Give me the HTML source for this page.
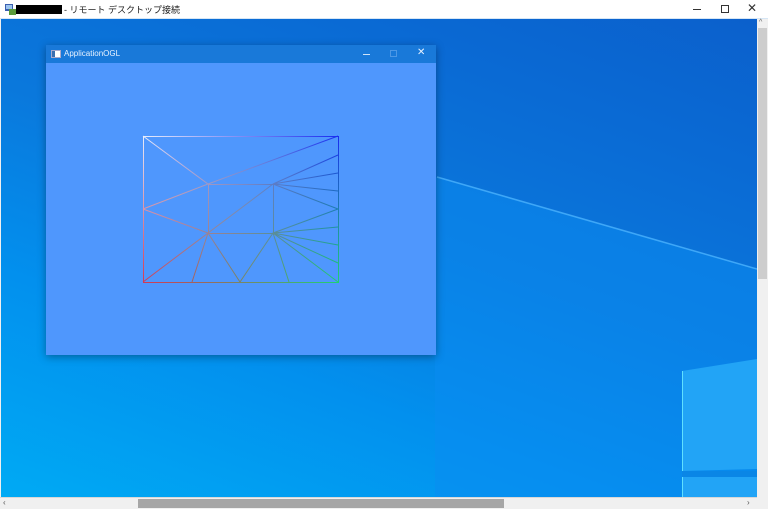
<!DOCTYPE html>
<html><head><meta charset="utf-8"><style>
*{margin:0;padding:0;box-sizing:border-box}
body{width:768px;height:509px;overflow:hidden;background:#f0f0f0;font-family:"Liberation Sans","Noto Sans CJK JP",sans-serif;position:relative}
.tb{position:absolute;left:0;top:0;width:768px;height:19px;background:#fff;border-bottom:1px solid #d6e6f5}
.desk{position:absolute;left:1px;top:19px;width:756px;height:478px;overflow:hidden;
background:linear-gradient(20deg,#00aaf4 0%,#0290ee 30%,#0a78dc 55%,#0a6ad4 80%,#0b60cc 100%)}
.vs{position:absolute;left:757px;top:19px;width:11px;height:478px;background:#f0f0f0}
.hs{position:absolute;left:0;top:497px;width:757px;height:12px;background:#f0f0f0;border-top:1px solid #d8d8d8}
.win{position:absolute;left:46px;top:45px;width:390px;height:310px;box-shadow:0 2px 8px rgba(0,0,0,.35)}
</style></head><body>
<div class="tb">
 <svg style="position:absolute;left:5px;top:4px" width="12" height="11"><rect x="0" y="0" width="8" height="7" fill="#3a5fb0"/><rect x="1" y="1" width="6" height="4" fill="#9cc4ee"/><rect x="4" y="5" width="7" height="6" fill="#5a9a3a"/></svg>
 <div style="position:absolute;left:16px;top:5px;width:46px;height:9px;background:#000"></div>
 <div style="position:absolute;left:64px;top:3px;font-size:9px;color:#222;white-space:nowrap">- リモート デスクトップ接続</div>
 <div style="position:absolute;left:693px;top:9px;width:8px;height:1px;background:#333"></div>
 <div style="position:absolute;left:721px;top:5px;width:8px;height:8px;border:1px solid #333"></div>
 <div style="position:absolute;left:747px;top:1px;font-size:12px;color:#333">✕</div>
</div>
<div class="desk">
 <svg width="756" height="478" style="position:absolute;left:0;top:0">
  <polygon points="434,158 756,250 756,478 434,478" fill="#0a8cf2" opacity="0.5"/>
  <line x1="436" y1="158" x2="756" y2="250" stroke="#4cb4ff" stroke-width="1.5" opacity="0.8"/>
  <polygon points="681,352 756,340 756,450 681,452" fill="#22a4f6"/>
  <polygon points="681,458 756,458 756,478 681,478" fill="#22a4f6"/>
  <line x1="681.5" y1="352" x2="681.5" y2="452" stroke="#5fe0ff" stroke-width="1"/>
  <line x1="681.5" y1="458" x2="681.5" y2="478" stroke="#5fe0ff" stroke-width="1"/>
  <rect x="681" y="452" width="75" height="6" fill="#0a86e6"/>
 </svg>
</div>
<div class="vs"><div style="position:absolute;left:1px;top:9px;width:9px;height:251px;background:#cdcdcd"></div><div style="position:absolute;left:2px;top:0;font-size:7px;color:#666">^</div></div>
<div class="hs"><div style="position:absolute;left:138px;top:1px;width:366px;height:9px;background:#a6a6a6"></div><div style="position:absolute;left:3px;top:0;font-size:8px;color:#555">‹</div><div style="position:absolute;left:747px;top:0;font-size:8px;color:#555">›</div></div>
<div class="win">
 <div style="position:absolute;left:0;top:0;width:390px;height:18px;background:#1979d9">
  <svg style="position:absolute;left:5px;top:5px" width="10" height="8"><rect x="0.5" y="0.5" width="9" height="7" fill="#fff" stroke="#aac"/><rect x="1" y="1" width="3" height="6" fill="#3b6fb0"/></svg>
  <div style="position:absolute;left:18px;top:4px;font-size:8px;color:#e8f2ff">ApplicationOGL</div>
  <div style="position:absolute;left:317px;top:9px;width:7px;height:1px;background:#cfe3f8"></div>
  <div style="position:absolute;left:344px;top:5px;width:7px;height:7px;border:1px solid #4d98e6"></div>
  <div style="position:absolute;left:371px;top:2px;font-size:10px;color:#e8f2ff">✕</div>
 </div>
 <div style="position:absolute;left:0;top:18px;width:390px;height:292px;background:#4f97fd"></div>
 <svg width="390" height="310" style="position:absolute;left:0;top:0">
  <defs>
   <linearGradient id="t" x1="97" y1="0" x2="292" y2="0" gradientUnits="userSpaceOnUse"><stop offset="0" stop-color="#e8eefc"/><stop offset="1" stop-color="#1a2cf0"/></linearGradient>
   <linearGradient id="b" x1="97" y1="0" x2="292" y2="0" gradientUnits="userSpaceOnUse"><stop offset="0" stop-color="#d23a55"/><stop offset="1" stop-color="#20d070"/></linearGradient>
   <linearGradient id="v" x1="0" y1="91" x2="0" y2="237" gradientUnits="userSpaceOnUse"><stop offset="0" stop-color="#fff" stop-opacity="0"/><stop offset="1" stop-color="#fff" stop-opacity="1"/></linearGradient>
   <mask id="vm"><rect width="390" height="310" fill="url(#v)"/></mask>
   <mask id="lm"><g stroke="#fff" stroke-width="1" fill="none" transform="translate(-46,-45)">
    <rect x="143.5" y="136.5" width="195" height="146"/>
    <rect x="208.5" y="184.5" width="65" height="49"/>
    <path d="M143 136L208 184L338 136M143 209L208 184M143 209L208 233L143 282M208 233L192 282M208 233L240 282L273 233L289 282M208 233L273 184M273 184L338 155M273 184L338 173M273 184L338 191M273 184L338 209M273 233L338 209M273 233L338 227M273 233L338 245M273 233L338 263M273 233L338 282"/>
   </g></mask>
  </defs>
  <g mask="url(#lm)">
   <rect width="390" height="310" fill="url(#t)"/>
   <rect width="390" height="310" fill="url(#b)" mask="url(#vm)"/>
  </g>
 </svg>
</div>
</body></html>
